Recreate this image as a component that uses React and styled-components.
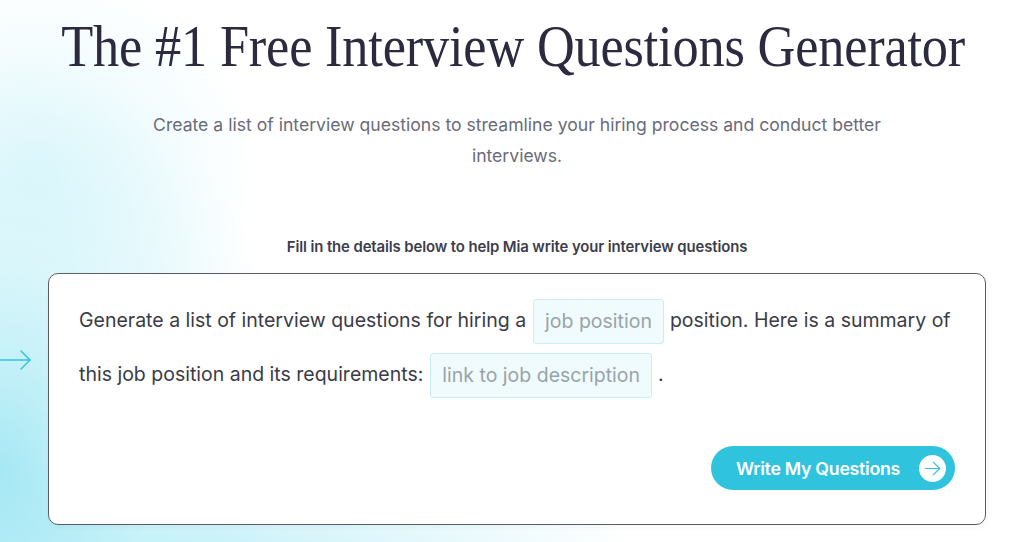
import React from "react";
import styled, { createGlobalStyle } from "styled-components";

const GlobalStyle = createGlobalStyle`
  html, body {
    margin: 0;
    padding: 0;
  }
  body {
    font-family: Inter, "Noto Sans", sans-serif;
    background: #ffffff;
  }
`;

const Page = styled.div`
  position: relative;
  width: 1024px;
  height: 542px;
  overflow: hidden;
  display: flex;
  flex-direction: column;
  align-items: center;
  background:
    radial-gradient(ellipse 300px 420px at 0px 470px, rgba(150, 228, 242, 0.85), rgba(190, 240, 248, 0.45) 50%, rgba(255, 255, 255, 0) 100%),
    radial-gradient(ellipse 460px 120px at 180px 560px, rgba(170, 234, 246, 0.7), rgba(255, 255, 255, 0) 100%),
    radial-gradient(ellipse 220px 200px at 40px 170px, rgba(200, 242, 249, 0.5), rgba(255, 255, 255, 0) 100%),
    #ffffff;
`;

const Header = styled.header`
  display: flex;
  flex-direction: column;
  align-items: center;
  padding-left: 10px;
`;

const Title = styled.h1`
  margin: 8px 0 0;
  font-family: "Liberation Serif", "DejaVu Serif", serif;
  font-weight: 400;
  font-size: 60px;
  line-height: 76px;
  letter-spacing: -0.2px;
  color: #2b2a3f;
  white-space: nowrap;
  transform: translateX(-4px) scaleX(0.872);
`;

const Subtitle = styled.p`
  margin: 25px 0 0;
  width: 760px;
  text-align: center;
  font-size: 17.6px;
  line-height: 31px;
  color: #6a6b78;
`;

const Hint = styled.p`
  margin: 67px 0 0;
  font-size: 14.9px;
  font-weight: 600;
  letter-spacing: -0.1px;
  color: #3c3d4c;
`;

const Row = styled.div`
  width: 100%;
  display: flex;
  align-items: center;
  margin-top: 17px;
`;

const SideArrow = styled.div`
  width: 48px;
  flex: none;
  display: flex;
  align-items: center;
  color: #35c5dc;
  margin-top: -78px;
`;

const Card = styled.div`
  width: 938px;
  height: 252px;
  box-sizing: border-box;
  background: #ffffff;
  border: 1px solid #5d5d66;
  border-radius: 10px;
  box-shadow: 2px 2px 6px rgba(0, 0, 0, 0.04);
  padding: 19px 30px 34px 30px;
  display: flex;
  flex-direction: column;
`;

const Prompt = styled.div`
  font-size: 19.5px;
  line-height: 54px;
  color: #3a3b47;
  padding-right: 4px;
`;

const Field = styled.span`
  display: inline-block;
  box-sizing: border-box;
  height: 45px;
  line-height: 43px;
  padding: 0 11px;
  margin: 0 6px 0 7px;
  vertical-align: middle;
  border: 1px solid #c9eef5;
  border-radius: 3px;
  background: #effbfd;
  color: #9aa3a8;
  font-size: 19.5px;
`;

const Actions = styled.div`
  margin-top: auto;
  display: flex;
  justify-content: flex-end;
`;

const Button = styled.button`
  display: flex;
  align-items: center;
  gap: 19px;
  height: 44px;
  padding: 0 9px 0 25px;
  border: none;
  border-radius: 22px;
  background: #30c3de;
  color: #ffffff;
  font-family: Inter, "Noto Sans", sans-serif;
  font-weight: 600;
  font-size: 17.8px;
  letter-spacing: -0.3px;
  cursor: pointer;
`;

const Circle = styled.span`
  width: 27px;
  height: 27px;
  border-radius: 50%;
  background: #ffffff;
  display: flex;
  align-items: center;
  justify-content: center;
  color: #30c3de;
`;

function ArrowIcon({ size = 20, width = 1.6 }) {
  return (
    <svg width={size} height={size} viewBox="0 0 24 24" fill="none" stroke="currentColor" strokeWidth={width} strokeLinecap="round" strokeLinejoin="round">
      <path d="M3 12h18" />
      <path d="M13 4l8 8-8 8" />
    </svg>
  );
}

export default function App() {
  return (
    <>
      <GlobalStyle />
      <Page>
        <Header>
          <Title>The #1 Free Interview Questions Generator</Title>
          <Subtitle>
            Create a list of interview questions to streamline your hiring process and conduct better interviews.
          </Subtitle>
          <Hint>Fill in the details below to help Mia write your interview questions</Hint>
        </Header>
        <Row>
          <SideArrow>
            <svg width="34" height="24" viewBox="0 0 34 24" fill="none" stroke="currentColor" strokeWidth="1.5" strokeLinecap="round" strokeLinejoin="round">
              <path d="M-2 12h32" />
              <path d="M21 3l9 9-9 9" />
            </svg>
          </SideArrow>
          <Card>
            <Prompt>
              Generate a list of interview questions for hiring a
              <Field>job position</Field>
              position. Here is a summary of this job position and its requirements:
              <Field>link to job description</Field>.
            </Prompt>
            <Actions>
              <Button>
                Write My Questions
                <Circle>
                  <ArrowIcon size={19} width={1.5} />
                </Circle>
              </Button>
            </Actions>
          </Card>
        </Row>
      </Page>
    </>
  );
}
